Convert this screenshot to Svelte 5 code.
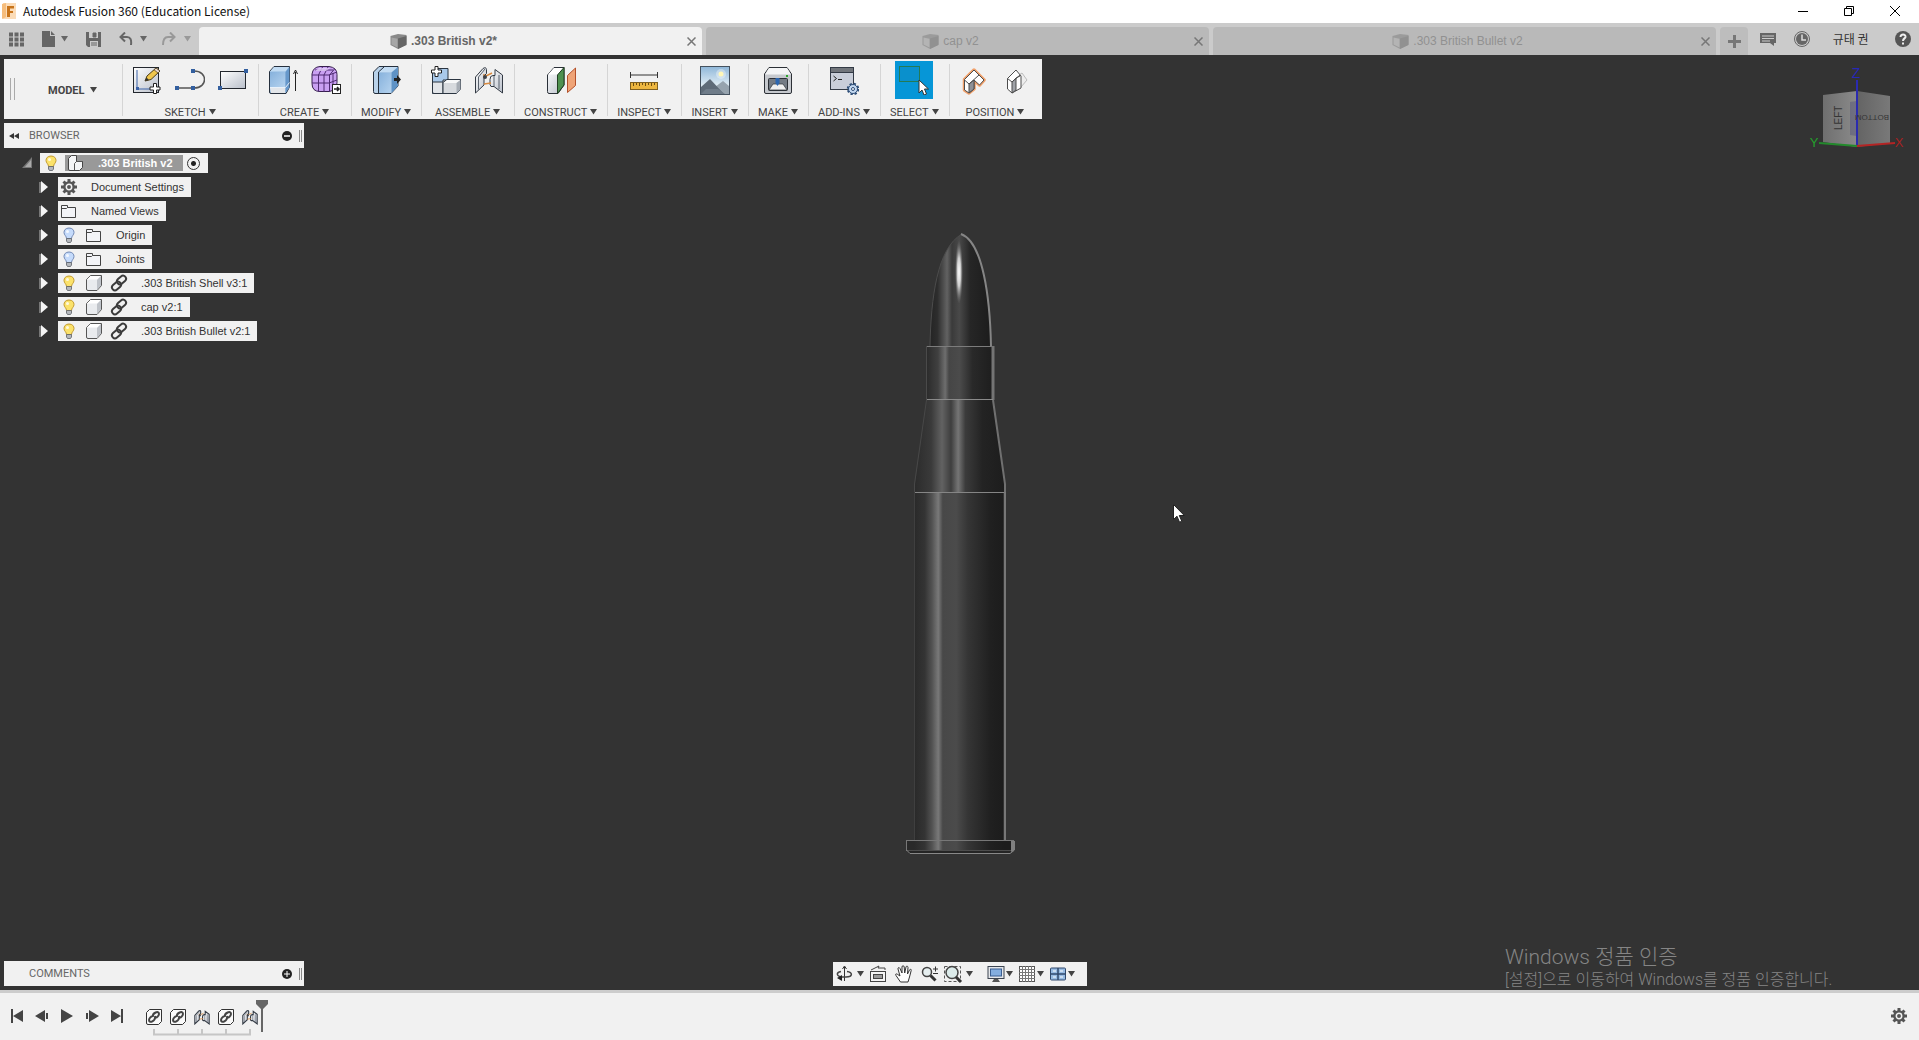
<script>
	const tabs = [
		{ title: '.303 British v2*', active: true },
		{ title: 'cap v2', active: false },
		{ title: '.303 British Bullet v2', active: false }
	];

	const groups = [
		{ label: 'SKETCH', icons: ['sketch', 'line', 'rectangle'] },
		{ label: 'CREATE', icons: ['extrude', 'form'] },
		{ label: 'MODIFY', icons: ['presspull'] },
		{ label: 'ASSEMBLE', icons: ['component', 'joint'] },
		{ label: 'CONSTRUCT', icons: ['plane'] },
		{ label: 'INSPECT', icons: ['measure'] },
		{ label: 'INSERT', icons: ['image'] },
		{ label: 'MAKE', icons: ['print'] },
		{ label: 'ADD-INS', icons: ['scripts'] },
		{ label: 'SELECT', icons: ['select'] },
		{ label: 'POSITION', icons: ['capture', 'revert'] }
	];

	const tree = [
		{ label: 'Document Settings', icons: ['gear'] },
		{ label: 'Named Views', icons: ['folder'] },
		{ label: 'Origin', icons: ['bulbOff', 'folder'] },
		{ label: 'Joints', icons: ['bulbOff', 'folder'] },
		{ label: '.303 British Shell v3:1', icons: ['bulb', 'body', 'link'] },
		{ label: 'cap v2:1', icons: ['bulb', 'body', 'link'] },
		{ label: '.303 British Bullet v2:1', icons: ['bulb', 'body', 'link'] }
	];

	const playback = ['first', 'prev', 'play', 'next', 'last'];
	const features = ['linked', 'linked', 'jointSmall', 'linked', 'jointSmall'];

	const navTools = [
		{ name: 'orbit', menu: true },
		{ name: 'look', menu: false },
		{ name: 'pan', menu: false },
		{ name: 'zoom', menu: false },
		{ name: 'fit', menu: true },
		{ name: 'display', menu: true },
		{ name: 'grid', menu: true },
		{ name: 'viewports', menu: true }
	];
</script>

<svelte:head>
	<title>Autodesk Fusion 360</title>
</svelte:head>

{#snippet caret()}
	<svg class="caret" width="7" height="6" viewBox="0 0 7 6" aria-hidden="true"><path d="M0 0h7L3.5 5.5z" fill="currentColor" /></svg>
{/snippet}

{#snippet cube()}
	<svg width="17" height="17" viewBox="0 0 17 17" aria-hidden="true">
		<path d="M0.5 3L8 1l8.500 1v9.500L8 16l-7.500-4z" fill="currentColor" opacity="0.75" />
		<path d="M1.500 4.500L7.500 5.800v8.700l-6-3z" fill="#fff" opacity="0.25" />
		<path d="M8 5.500l8.500-2.500v9L8 16z" fill="currentColor" />
	</svg>
{/snippet}

<!-- 30px icons of the ribbon -->
{#snippet toolIcon(name)}
	<svg width="30" height="30" viewBox="0 0 30 30" aria-hidden="true">
		{#if name === 'sketch'}
			<rect x="1.500" y="2.500" width="25" height="25" fill="url(#steel)" stroke="#23272e" />
			<path d="M5 5v19h16" fill="none" stroke="#3b62a8" />
			<rect x="4" y="22" width="3" height="3" fill="#3b62a8" />
			<path d="M13 16l2-5L24 3l4 3-9 8.500z" fill="#f0c64b" stroke="#4a3a12" />
			<path d="M13 16l1.500-3.500 2.500 2.500z" fill="#333" />
			<path d="M24 3l4 3-2 2-4-3.200z" fill="#e8d6d0" stroke="#4a3a12" stroke-width="0.7" />
			<path d="M21.500 18.500h3v3.500H28v3h-3.500v3.500h-3V25H18v-3h3.500z" fill="#fff" stroke="#222" />
		{:else if name === 'line'}
			<path d="M2 23h17M19 6c14 0 14 17 0 17" fill="none" stroke="#555" stroke-width="1.500" />
			<rect x="0" y="21" width="4" height="4" fill="#335f9f" />
			<rect x="16" y="21" width="4" height="4" fill="#335f9f" />
			<rect x="16" y="4" width="4" height="4" fill="#335f9f" />
		{:else if name === 'rectangle'}
			<rect x="2.500" y="6.500" width="25" height="17" fill="url(#steel)" stroke="#23272e" />
			<rect x="0" y="21" width="4" height="4" fill="#335f9f" />
			<rect x="26" y="4" width="4" height="4" fill="#335f9f" />
		{:else if name === 'extrude'}
			<path d="M1.500 6.500L6 1.500h15.500V22L18 28.500H3q-1.500 0-1.500-1.500z" fill="#8fb8df" stroke="#26303d" />
			<path d="M2 6.500L6 2h15l-3.500 4.500z" fill="#c3dcf3" />
			<path d="M2 7h15.500v15H2z" fill="url(#blue)" />
			<path d="M2 23h15.500v5H3z" fill="#e3e6ea" />
			<path d="M17.500 7L21.500 2v20.500L17.500 28z" fill="#6698cb" />
			<path d="M2 22.500h15.500l4-5" fill="none" stroke="#e8f1fa" />
			<path d="M27.500 26V7M25.500 9l2-4 2 4" fill="none" stroke="#222" />
		{:else if name === 'form'}
			<path d="M1 9q1-7 8-7.500h9q8 1 8 8v8q0 8-8 9H9q-8 0-8-8z" fill="#c9a0f2" stroke="#37204e" />
			<path d="M1 10h17l8-3M1 18h17l8-3M7.500 27V10l4-8M13 27V10l4-8M18.500 27V10l5-6M4 5h18M22 25V8" fill="none" stroke="#4f2b73" />
			<path d="M8 3h11l-4 3H4z" fill="#e7d2fc" opacity="0.8" />
			<rect x="21.500" y="19.500" width="8" height="9" fill="#fff" stroke="#222" />
			<path d="M23 24h5M26 22l2 2-2 2" fill="none" stroke="#222" stroke-width="1.500" />
		{:else if name === 'presspull'}
			<path d="M2.500 7L8 1.500h19V21l-7 7.500H4q-1.500 0-1.500-2z" fill="#b9d2ea" stroke="#26303d" />
			<path d="M7.500 7.500h13V28H8z" fill="url(#blue)" />
			<path d="M7.500 7L13 2h13.500l-6 5z" fill="#c3dcf3" />
			<path d="M20.500 7.500L27 2v19l-6.500 7z" fill="#5f93c6" />
			<path d="M7.500 28V7L13 2" fill="none" stroke="#26303d" />
			<path d="M23 13h3v-3l4 4.500-4 4.500v-3h-3z" fill="#222" />
		{:else if name === 'component'}
			<path d="M1.500 8L6 3.500h11V15h-5v13.500H1.500z" fill="#a9c9ea" stroke="#2a3440" />
			<path d="M1.500 17h10.500v11.500H3q-1.500 0-1.500-1.500z" fill="#e2e5e9" stroke="#2a3440" />
			<path d="M12 17.500l4-3h13.500v10l-4 4H12z" fill="#d7dade" stroke="#2a3440" />
			<path d="M12.500 18h13l3.500-3H16z" fill="#f7f8f9" />
			<path d="M25.500 18l4-3v9.500l-4 4z" fill="#a7adb5" />
			<path d="M4 1.500h3V5h3.500v3H7v3.500H4V8H.5V5H4z" fill="#fff" stroke="#222" />
		{:else if name === 'joint' || name === 'jointSmall'}
			<path d="M1.500 28V12L9 3.500q3-2 3.500 1v4L10 11v9z" fill="url(#steel)" stroke="#333a44" stroke-width={name === 'joint' ? 1 : 2} />
			<path d="M4.500 24.500V12L11 4" fill="none" stroke="#59616c" />
			<path d="M28.500 28V10L21 4.500v6h-2q-3 0-3 4v5q0 3 4 2z" fill="url(#steel)" stroke="#333a44" stroke-width={name === 'joint' ? 1 : 2} />
			<path d="M25 24V10M20 11v10" fill="none" stroke="#59616c" />
			<path d="M10 9v4m2-2l6-3m-8 11l7-1" stroke="#d88b42" stroke-width="1.500" fill="none" />
			<circle cx="11" cy="12" r="2" fill="#3b4049" />
		{:else if name === 'plane'}
			<path d="M1.500 10L8 2.500h10V20l-6 8.500H3q-1.500 0-1.500-2z" fill="url(#steel)" stroke="#2a3038" />
			<path d="M2 9.500L8 3h9.500L11 9.500z" fill="#fff" />
			<path d="M11.500 10L18 2.500V20l-6.500 8.500z" fill="#4f9150" stroke="#203e21" />
			<path d="M21.500 10.500l8-7.500v17.500l-8 7z" fill="#efa477" stroke="#b4512b" />
		{:else if name === 'measure'}
			<path d="M1.500 7v6m27-6v6M2 10h26" fill="none" stroke="#333" />
			<rect x="1.500" y="17.500" width="27" height="7" fill="#edb63f" stroke="#80601f" />
			<path d="M4.500 18v3m3-3v2m3-2v3m3-3v2m3-2v3m3-3v2m3-2v3m3-3v2" stroke="#6d4e12" />
		{:else if name === 'image'}
			<rect x="0.500" y="1.500" width="29" height="28" fill="url(#sky)" stroke="#45525f" />
			<circle cx="21" cy="9" r="5" fill="#fff" opacity="0.350" />
			<circle cx="21" cy="9" r="2.500" fill="#fff7b8" />
			<path d="M15 22l8-6 6 5v8H15z" fill="#96a3ae" />
			<path d="M1 22l9-8 14 15H1z" fill="#5e6b78" />
			<path d="M1 29l5-5h12l7 5z" fill="#6f7c89" />
		{:else if name === 'print'}
			<path d="M1.500 9L6 2.500h18L28.500 9v18q0 1.500-1.500 1.500H3q-1.500 0-1.500-1.500z" fill="#c6c9ce" stroke="#2c3036" />
			<path d="M2 9.500L6 3h18l4 6.500z" fill="#f4f5f6" />
			<rect x="5.500" y="13.500" width="19" height="12" rx="1" fill="#747b84" stroke="#2c3036" />
			<path d="M6 25l4-6h10l4 6z" fill="#f0f0f0" stroke="#2c3036" stroke-width="0.700" />
			<path d="M12.500 13h4v5l-2 3-2-3z" fill="#2d67b0" />
			<rect x="23" y="10" width="2" height="2" fill="#2ba82b" />
		{:else if name === 'scripts'}
			<rect x="1.500" y="2.500" width="23" height="22" fill="#c9ced9" stroke="#333a45" />
			<rect x="2" y="3" width="22" height="4" fill="#71757b" />
			<path d="M2 7.500h22" stroke="#333a45" />
			<path d="M4.500 11l3 2.500-3 2.500M9 14.500h4" fill="none" stroke="#222" />
			<circle cx="24" cy="24" r="5" fill="none" stroke="#2d4d77" stroke-width="2.500" stroke-dasharray="2.200 1.727" />
			<circle cx="24" cy="24" r="4.500" fill="#c3d8f0" stroke="#2d4d77" />
			<circle cx="24" cy="24" r="1.500" fill="#fff" stroke="#2d4d77" />
		{:else if name === 'select'}
			<rect x="0.500" y="1.500" width="20" height="15" fill="#0a90cc" stroke="#257a55" />
			<path d="M20 15v13l3-3 2 5 2.500-1-2-5h4z" fill="#fff" stroke="#333" />
		{:else if name === 'capture'}
			<path d="M5.500 14.500L15 5l10 10-4.500 5-5.500-5v9l-5 4-4.500-3z" fill="#f0a06a" stroke="#f0a06a" stroke-width="3.500" stroke-linejoin="round" />
			<path d="M5.500 14.500L15 5l10 10-4.500 5-5.500-5v9l-5 4-4.500-3z" fill="#fff" stroke="#4d4d4d" />
			<path d="M10 19l5-4v9l-5 4z" fill="#8d9096" stroke="#4d4d4d" />
			<path d="M5.500 15l4.500 4L20 10" fill="none" stroke="#4d4d4d" />
		{:else}
			<path d="M14 12l6-4 5 7-6 7-6-2z" fill="#ededed" stroke="#bbb" />
			<path d="M5.500 13.500L14 5l5 6v12l-9 5-4.500-4z" fill="#fff" stroke="#4d4d4d" />
			<path d="M10 17l4-4v12l-4 3zM14 13l4-2" fill="#a0a3a8" stroke="#4d4d4d" />
			<path d="M5.500 13.500L10 17l8-7" fill="none" stroke="#4d4d4d" />
		{/if}
	</svg>
{/snippet}

{#snippet gear(size)}
	<svg width={size} height={size} viewBox="0 0 16 16" aria-hidden="true">
		<path d="M8 0v16M0 8h16M2.500 2.500l11 11M13.500 2.500l-11 11" stroke="#555" stroke-width="3" />
		<circle cx="8" cy="8" r="5.800" fill="#555" />
		<circle cx="8" cy="8" r="2.700" fill="#555" stroke="#f1f1f1" stroke-width="1.500" />
	</svg>
{/snippet}

<!-- 16px icons of the browser tree -->
{#snippet treeIcon(name)}
	{#if name === 'gear'}
		{@render gear(16)}
	{:else}
		<svg width="18" height="18" viewBox="0 0 18 18" aria-hidden="true">
			{#if name === 'folder'}
				<path d="M1.500 15.500V3.500h6v2h8v10z" fill="#f3f4f7" stroke="#444" />
				<path d="M1.500 6.500h5l1-1" fill="none" stroke="#444" />
			{:else if name === 'bulb' || name === 'bulbOff'}
				<path d="M9 2C5.500 2 4 4.300 4 6.500c0 2.500 2.500 3.500 2.500 6h5c0-2.500 2.500-3.500 2.500-6C14 4.300 12.500 2 9 2z" fill={name === 'bulb' ? '#fbe26b' : '#c5dbfb'} stroke={name === 'bulb' ? '#c39b2f' : '#7289b5'} />
				<circle cx="7.500" cy="5.500" r="1.500" fill="#fff" opacity="0.800" />
				<path d="M6.500 12.500h5v2.500l-1 1.500h-3l-1-1.500z" fill="#b5b8bd" stroke="#5b5f66" stroke-width="0.800" />
			{:else if name === 'body'}
				<path d="M1.500 5.500l4-4h11v10l-4.500 5H3q-1.500 0-1.500-1.500z" fill="#e9ebee" stroke="#555" />
				<path d="M2 5.500l3.500-3.500h10.500L12 5.500z" fill="#fff" />
				<path d="M12 6l4-4v9.500L12 16z" fill="#bfc3c9" />
			{:else}
				<g fill="none" stroke="#3c3c3c" stroke-width="2">
					<rect x="6.500" y="3" width="10" height="6" rx="3" transform="rotate(-42 11.500 6)" />
					<rect x="1.500" y="9" width="10" height="6" rx="3" transform="rotate(-42 6.500 12)" />
				</g>
			{/if}
		</svg>
	{/if}
{/snippet}

{#snippet navIcon(name)}
	<svg width="20" height="20" viewBox="0 0 20 20" aria-hidden="true">
		{#if name === 'orbit'}
			<path d="M10.500 3v14M8.500 5l2-3 2 3" fill="none" stroke="#333" />
			<path d="M7 7.500c-5 1-5 4.500 1 5.500h4c7 0 7-5 1-5.500" fill="none" stroke="#444" stroke-width="1.500" />
			<path d="M3 14l5-3v6z" fill="#222" />
		{:else if name === 'look'}
			<rect x="2.500" y="7.500" width="15" height="10" fill="#f5f5f5" stroke="#444" />
			<rect x="5.500" y="10.500" width="9" height="4" fill="#999" stroke="#444" />
			<path d="M3 6l8-4-1 2h7v2" fill="none" stroke="#444" />
		{:else if name === 'pan'}
			<path d="M6.500 18L2 11.500c-1-2 .5-2 2-.8L6 12 4 5c-.3-1.600 1.300-2 2-.5L8 9V3c0-1.700 2-1.700 2.200 0l.5 6 1.300-6c.4-1.500 2-1 2 .5L13.500 10l2-4c.8-1.400 2-.8 1.700.5L15.500 13 14 18z" fill="#fff" stroke="#333" />
		{:else if name === 'zoom'}
			<circle cx="7" cy="8" r="4.500" fill="#e6eff0" stroke="#444" stroke-width="1.500" />
			<path d="M10.500 11.500l5 5" stroke="#333" stroke-width="3" />
			<path d="M13 5h5m-2.500-2.500v5M13 9.500h5" stroke="#333" />
		{:else if name === 'fit'}
			<rect x="1.500" y="2.500" width="16" height="15" fill="none" stroke="#555" stroke-dasharray="3 2" />
			<circle cx="9" cy="8.500" r="6" fill="#dcebea" stroke="#444" stroke-width="1.500" />
			<path d="M13 13l5 5" stroke="#333" stroke-width="3" />
		{:else if name === 'display'}
			<rect x="2" y="2.500" width="16" height="12" fill="#e4e7eb" stroke="#3c4451" />
			<rect x="4.500" y="5" width="11" height="7" fill="#84aee0" stroke="#3b5f92" />
			<path d="M8 15h4l2 3H6z" fill="#555" />
		{:else if name === 'grid'}
			<rect x="2.500" y="2.500" width="15" height="15" fill="#fff" stroke="#555" />
			<path d="M5.500 2v16m3-16v16m3-16v16m3-16v16M2 5.500h16m-16 3h16m-16 3h16m-16 3h16" stroke="#777" />
		{:else}
			<rect x="2.500" y="4" width="15" height="12" rx="1" fill="#97bbe3" stroke="#30496d" />
			<path d="M10 4v12M2.500 10h15" stroke="#30496d" stroke-width="1.500" />
			<path d="M5 7h3m4 0h3M5 13h3m4 0h3" stroke="#fff" />
		{/if}
	</svg>
{/snippet}

<svg class="defs" width="0" height="0" aria-hidden="true">
	<defs>
		<linearGradient id="steel" x1="0" y1="0" x2="1" y2="1">
			<stop offset="0" stop-color="#fff" />
			<stop offset="1" stop-color="#b9bfca" />
		</linearGradient>
		<linearGradient id="blue" x1="0" y1="0" x2="1" y2="1">
			<stop offset="0" stop-color="#86b1dc" />
			<stop offset="1" stop-color="#b5d3ef" />
		</linearGradient>
		<linearGradient id="sky" x1="0" y1="0" x2="0" y2="1">
			<stop offset="0" stop-color="#8fb7d9" />
			<stop offset="0.700" stop-color="#e2eef5" />
		</linearGradient>
	</defs>
</svg>

<div class="app">
	<header class="titlebar">
		<svg width="16" height="16" viewBox="0 0 16 16" aria-hidden="true">
			<rect x="1" y="0" width="13" height="16" fill="#fbdcb8" />
			<path d="M0 1l4-1v14l-4 2z" fill="#f6bd7c" />
			<path d="M5 3h7v2.500H8V8h3v2H8v4H5z" fill="#c8741a" />
		</svg>
		<h1>Autodesk Fusion 360 (Education License)</h1>
		<div class="window-buttons">
			<button aria-label="Minimize"><svg width="12" height="12" viewBox="0 0 12 12"><path d="M1 6.500h10" stroke="#000" /></svg></button>
			<button aria-label="Restore"><svg width="12" height="12" viewBox="0 0 12 12"><path d="M1.500 3.500h7v7h-7zM3.500 3V1.500h7v7H9" fill="none" stroke="#000" /></svg></button>
			<button aria-label="Close"><svg width="12" height="12" viewBox="0 0 12 12"><path d="M1 1l10 10M11 1L1 11" stroke="#000" /></svg></button>
		</div>
	</header>

	<nav class="tabbar">
		<div class="quick">
			<button class="q-grid" aria-label="Data panel">
				<svg width="15" height="15" viewBox="0 0 15 15"><path d="M0 2.500h15M0 7.500h15M0 12.500h15" stroke="#666" stroke-width="4" stroke-dasharray="4 1.500" /></svg>
			</button>
			<button class="q-file" aria-label="File">
				<svg width="13" height="16" viewBox="0 0 13 16"><path d="M0 0h8v5h5v11H0zM9 0l4 4H9z" fill="#666" /></svg>
				{@render caret()}
			</button>
			<button class="q-save" aria-label="Save">
				<svg width="15" height="15" viewBox="0 0 15 15"><path d="M0 0h15v15H2l-2-2z" fill="#666" /><path d="M3 0h9v6H3zM4 9h8v6H4z" fill="#ccc" /><path d="M7 1h3v4H7zM5 11h6M5 13h6" fill="#666" stroke="#666" /></svg>
			</button>
			<button class="q-undo" aria-label="Undo">
				<svg width="15" height="14" viewBox="0 0 15 14"><path d="M2 5h6q5 0 4 8M6 .5L1.500 5 6 9.500" fill="none" stroke="#666" stroke-width="2" /></svg>
				{@render caret()}
			</button>
			<button class="q-redo" aria-label="Redo">
				<svg width="15" height="14" viewBox="0 0 15 14"><path d="M13 5H7q-5 0-5 8M9 .5L13.500 5 9 9.500" fill="none" stroke="currentColor" stroke-width="2" /></svg>
				{@render caret()}
			</button>
		</div>
		{#each tabs as tab}
			<div class="tab" class:active={tab.active}>
				<button class="tab-title">{@render cube()}{tab.title}</button>
				<button class="tab-close" aria-label="Close {tab.title}">
					<svg width="9" height="9" viewBox="0 0 9 9"><path d="M.5 .5l8 8M8.500 .5l-8 8" stroke="currentColor" stroke-width="1.500" /></svg>
				</button>
			</div>
		{/each}
		<button class="new-tab" aria-label="New design">
			<svg width="13" height="13" viewBox="0 0 13 13"><path d="M6.500 0v13M0 6.500h13" stroke="#777" stroke-width="3" /></svg>
		</button>
		<div class="account">
			<button aria-label="Comments">
				<svg width="16" height="15" viewBox="0 0 16 15"><path d="M0 1h16v10h-2v3l-4-3H0z" fill="#666" /><path d="M2 4h12M2 6.500h12M2 9h8" stroke="#ccc" /></svg>
			</button>
			<button aria-label="Job status">
				<svg width="16" height="16" viewBox="0 0 16 16"><circle cx="8" cy="8" r="7.500" fill="none" stroke="#666" /><circle cx="8" cy="8" r="6" fill="#666" /><path d="M8 3.500V9h4" fill="none" stroke="#ddd" stroke-width="1.500" /></svg>
			</button>
			<button class="user">규태 권</button>
			<button aria-label="Help">
				<svg width="16" height="16" viewBox="0 0 16 16"><circle cx="8" cy="8" r="8" fill="#555" /><path d="M5.500 6c0-3.500 5.500-3 5 0-.3 1.500-2.500 1.500-2.500 4M8 11.500v2" fill="none" stroke="#eee" stroke-width="2" /></svg>
			</button>
		</div>
	</nav>

	<main class="viewport">
		<div class="scene">
			<svg width="113" height="626" viewBox="904 230 113 626" role="img" aria-label="Cartridge model">
				<defs>
					<linearGradient id="case" gradientUnits="userSpaceOnUse" x1="914" y1="0" x2="1004" y2="0">
						<stop offset="0" stop-color="#292929" />
						<stop offset="0.120" stop-color="#343434" />
						<stop offset="0.200" stop-color="#525252" />
						<stop offset="0.270" stop-color="#797979" />
						<stop offset="0.320" stop-color="#484848" />
						<stop offset="0.470" stop-color="#4b4b4b" />
						<stop offset="0.600" stop-color="#353535" />
						<stop offset="0.850" stop-color="#202020" />
						<stop offset="1" stop-color="#1c1c1c" />
					</linearGradient>
					<linearGradient id="neck" gradientUnits="userSpaceOnUse" x1="927" y1="0" x2="992" y2="0">
						<stop offset="0" stop-color="#2c2c2c" />
						<stop offset="0.170" stop-color="#404040" />
						<stop offset="0.280" stop-color="#6e6e6e" />
						<stop offset="0.340" stop-color="#464646" />
						<stop offset="0.500" stop-color="#4b4b4b" />
						<stop offset="0.700" stop-color="#292929" />
						<stop offset="1" stop-color="#1e1e1e" />
					</linearGradient>
					<linearGradient id="shoulder" x1="0" y1="0" x2="1" y2="0">
						<stop offset="0" stop-color="#2c2c2c" />
						<stop offset="0.180" stop-color="#3a3a3a" />
						<stop offset="0.300" stop-color="#626262" />
						<stop offset="0.400" stop-color="#3e3e3e" />
						<stop offset="0.480" stop-color="#757575" />
						<stop offset="0.560" stop-color="#3b3b3b" />
						<stop offset="0.750" stop-color="#232323" />
						<stop offset="1" stop-color="#1d1d1d" />
					</linearGradient>
					<linearGradient id="ogive" x1="0" y1="0" x2="1" y2="0">
						<stop offset="0" stop-color="#242424" />
						<stop offset="0.120" stop-color="#2d2d2d" />
						<stop offset="0.280" stop-color="#626262" />
						<stop offset="0.360" stop-color="#3a3a3a" />
						<stop offset="0.480" stop-color="#494949" />
						<stop offset="0.660" stop-color="#262626" />
						<stop offset="1" stop-color="#1c1c1c" />
					</linearGradient>
					<radialGradient id="glint">
						<stop offset="0" stop-color="#fff" />
						<stop offset="0.450" stop-color="#ddd" stop-opacity="0.900" />
						<stop offset="1" stop-color="#777" stop-opacity="0" />
					</radialGradient>
				</defs>
				<path d="M930 346C931 298 937 248 962 234C983 246 991 298 991 346z" fill="url(#ogive)" />
				<path d="M930 346C931 298 937 248 962 234" fill="none" stroke="#4c4c4c" />
				<path d="M961 234C983 242 990 298 991 346" fill="none" stroke="#858585" stroke-width="2" />
				<ellipse cx="959" cy="272" rx="4" ry="32" fill="url(#glint)" />
				<rect x="927" y="346" width="66" height="54" fill="url(#neck)" />
				<path d="M927 346.500h67" stroke="#7c7c7c" />
				<path d="M926.500 346v54" stroke="#4a4a4a" />
				<path d="M993 346v54" stroke="#747474" stroke-width="3" />
				<path d="M927 400L915 484v8h90v-8L993 400z" fill="url(#shoulder)" />
				<path d="M926.500 400L914.500 484v8" fill="none" stroke="#484848" />
				<path d="M993 400L1005 484v8" fill="none" stroke="#707070" stroke-width="2" />
				<path d="M927 399.500h66" stroke="#8a8a8a" />
				<rect x="915" y="492" width="88" height="348" fill="url(#case)" />
				<path d="M914 492.500h92" stroke="#858585" />
				<path d="M914.500 492v348" stroke="#3f3f3f" />
				<path d="M1005 492v348" stroke="#777" stroke-width="2" />
				<rect x="906.500" y="840.500" width="107" height="10" fill="url(#case)" stroke="#777" />
				<path d="M907 850.500l3 3h100l4-3" fill="#252525" stroke="#888" />
				<path d="M1011 841h4v9l-4 2z" fill="#808080" />
			</svg>
		</div>

		<svg class="viewcube" width="96" height="90" viewBox="1808 62 96 90" role="img" aria-label="View cube">
			<defs>
				<linearGradient id="cubeLeft"><stop offset="0" stop-color="#6f6f6f" /><stop offset="1" stop-color="#8a8a8a" /></linearGradient>
				<linearGradient id="cubeRight"><stop offset="0" stop-color="#646464" /><stop offset="1" stop-color="#797979" /></linearGradient>
			</defs>
			<path d="M1823 95l34-4v56l-34-5z" fill="url(#cubeLeft)" />
			<path d="M1857 91l33 5v47l-33 4z" fill="url(#cubeRight)" />
			<path d="M1850 102l7-1v35l-7-1z" fill="#55557a" opacity="0.500" />
			<path d="M1857 80v66" stroke="#2b2bb0" stroke-width="2" />
			<path d="M1819 143l38 3" stroke="#238a2c" stroke-width="2" />
			<path d="M1857 146l38-3" stroke="#b32424" stroke-width="2" />
			<text x="1856" y="78" font-size="14" fill="#2727b8" text-anchor="middle">Z</text>
			<text x="1814" y="147" font-size="13" fill="#23a02c" text-anchor="middle">Y</text>
			<text x="1899" y="147" font-size="13" fill="#a82222" text-anchor="middle">X</text>
			<text transform="translate(1842 130) rotate(-90)" font-size="10" fill="#353535">LEFT</text>
			<text transform="translate(1889 115) rotate(180)" font-size="8" fill="#353535">BOTTOM</text>
		</svg>

		<svg class="pointer" width="12" height="19" viewBox="0 0 12 19" aria-hidden="true">
			<path d="M.5 .5v15l3.500-3.300 2.500 6 2.300-1-2.500-5.700h5z" fill="#fff" stroke="#222" />
		</svg>

		<div class="watermark">
			<p class="wm-title">Windows 정품 인증</p>
			<p>[설정]으로 이동하여 Windows를 정품 인증합니다.</p>
		</div>

		<div class="overlay">
			<div class="ribbon">
				<div class="workspace">
					<span class="grip"></span>
					<button>MODEL {@render caret()}</button>
				</div>
				{#each groups as group}
					<div class="group">
						<div class="group-icons">
							{#each group.icons as name}
								<button class="tool" class:selected={name === 'select'} aria-label={name}>{@render toolIcon(name)}</button>
							{/each}
						</div>
						<button class="group-label">{group.label} {@render caret()}</button>
					</div>
				{/each}
			</div>

			<section class="panel">
				<button class="collapse" aria-label="Collapse browser">
					<svg width="10" height="6" viewBox="0 0 10 6"><path d="M5 0v6L0 3zM10 0v6L5 3z" fill="#333" /></svg>
				</button>
				<h2>BROWSER</h2>
				<button class="round" aria-label="Minimize browser">
					<svg width="10" height="10" viewBox="0 0 10 10"><circle cx="5" cy="5" r="5" fill="#222" /><path d="M2 5h6" stroke="#fff" stroke-width="1.500" /></svg>
				</button>
				<span class="edge"></span>
			</section>

			<ul class="tree">
				<li class="root">
					<button class="expander" aria-label="Collapse">
						<svg width="10" height="12" viewBox="0 0 10 12"><path d="M10 0v11H0z" fill="#777" /><path d="M9 3v7H3z" fill="#aaa" /></svg>
					</button>
					<div class="node">
						<span class="slot">{@render treeIcon('bulb')}</span>
						<div class="highlight">
							<svg width="18" height="18" viewBox="0 0 18 18" aria-hidden="true">
								<path d="M1.500 4.500l3-3h5v6h6v6l-3 3h-9.500q-1.500 0-1.500-1.500z" fill="#f4f5f6" stroke="#444" />
								<path d="M7.500 16V9.500l2-2h6" fill="none" stroke="#555" />
							</svg>
							<span>.303 British v2</span>
						</div>
						<input type="radio" checked aria-label="Activate component" />
					</div>
				</li>
				{#each tree as item}
					<li>
						<button class="expander" aria-label="Expand {item.label}">
							<svg width="9" height="12" viewBox="0 0 9 12"><path d="M0 1h2v11H0z" fill="#777" /><path d="M2 0l7 6-7 6z" fill="#f5f5f5" /></svg>
						</button>
						<div class="node">
							{#each item.icons as name}
								<span class="slot">{@render treeIcon(name)}</span>
							{/each}
							<span class="name">{item.label}</span>
						</div>
					</li>
				{/each}
			</ul>

			<div class="bottom">
				<section class="panel">
					<span class="collapse"></span>
					<h2>COMMENTS</h2>
					<button class="round" aria-label="Expand comments">
						<svg width="10" height="10" viewBox="0 0 10 10"><circle cx="5" cy="5" r="5" fill="#222" /><path d="M2 5h6M5 2v6" stroke="#fff" /></svg>
					</button>
					<span class="edge"></span>
				</section>
				<div class="navbar">
					{#each navTools as tool}
						<button class:menu={tool.menu} class={tool.name} aria-label={tool.name}>
							{@render navIcon(tool.name)}
							{#if tool.menu}{@render caret()}{/if}
						</button>
					{/each}
				</div>
			</div>
		</div>
	</main>

	<footer class="timeline">
		<div class="playback">
			{#each playback as name}
				<button aria-label={name}>
					<svg width="14" height="14" viewBox="0 0 14 14" fill="#444">
						{#if name === 'first'}
							<path d="M1 0h2v14H1zM13 1v12L3 7z" />
						{:else if name === 'prev'}
							<path d="M10 1v12L0 7zM11 4h2v6h-2z" />
						{:else if name === 'play'}
							<path d="M1 0v14l12-7z" />
						{:else if name === 'next'}
							<path d="M4 1v12l10-6zM1 4h2v6H1z" />
						{:else}
							<path d="M1 1v12l10-6zM11 0h2v14h-2z" />
						{/if}
					</svg>
				</button>
			{/each}
		</div>
		<div class="history">
			<div class="features">
				{#each features as name}
					<button aria-label={name}>
						{#if name === 'linked'}
							<svg width="16" height="16" viewBox="0 0 16 16">
								<path d="M.5 3.500l3-3h12v12l-3 3H2q-1.500 0-1.500-1.500z" fill="#fafafa" stroke="#333" />
								<g fill="none" stroke="#444" stroke-width="2">
									<path d="M7 8C6 4 13 1 13 5c0 2-2 3-3 4" />
									<path d="M9 7c1 5-6 8-6 4 0-2 2-3 3-4" />
								</g>
							</svg>
						{:else}
							<span class="small-joint">{@render toolIcon(name)}</span>
						{/if}
					</button>
				{/each}
			</div>
			<svg class="bracket" width="98" height="7" viewBox="0 0 98 7" aria-hidden="true"><path d="M1 0v5.500h96V0M25 0v5M49 0v5M73 0v5" fill="none" stroke="#c6c6c6" stroke-width="2" /></svg>
		</div>
		<svg class="marker" width="12" height="32" viewBox="0 0 12 32" aria-hidden="true"><path d="M0 0h12v4L7 9v23H5V9L0 4z" fill="#666" /></svg>
		<button class="settings" aria-label="Timeline settings">{@render gear(16)}</button>
	</footer>
</div>

<style>
	:global(body) {
		margin: 0;
	}

	.app {
		display: flex;
		flex-direction: column;
		height: 100vh;
		overflow: hidden;
		font-family: Roboto, 'Liberation Sans', sans-serif;
		font-size: 11px;
		color: #444;
		background: #333;
	}

	.defs {
		position: absolute;
	}

	svg {
		display: block;
		flex: none;
	}

	button {
		display: flex;
		align-items: center;
		justify-content: center;
		border: 0;
		padding: 0;
		background: none;
		color: inherit;
		font: inherit;
	}

	h1,
	h2,
	p,
	ul {
		margin: 0;
		padding: 0;
		font-weight: 400;
	}

	/* title bar */
	.titlebar {
		display: flex;
		align-items: center;
		height: 22px;
		padding: 0 1px 1px 2px;
		background: #fff;
	}

	h1 {
		margin-left: 5px;
		font-family: 'Noto Sans CJK KR', sans-serif;
		font-size: 12px;
		line-height: 22px;
		color: #111;
	}

	.window-buttons {
		display: flex;
		margin-left: auto;
	}

	.window-buttons button {
		width: 46px;
		height: 20px;
	}

	/* document tabs */
	.tabbar {
		display: flex;
		align-items: stretch;
		height: 28px;
		padding-top: 4px;
		background: #cbcbcb;
	}

	.quick {
		display: flex;
		align-items: center;
		gap: 18px;
		width: 190px;
		padding: 0 0 4px 9px;
		color: #666;
	}

	.quick button {
		gap: 6px;
	}

	.quick .q-redo {
		gap: 8px;
		margin-left: -4px;
		color: #999;
	}

	.tab {
		display: flex;
		flex: 1;
		margin-right: 4px;
		border-radius: 4px 4px 0 0;
		background: #b9b9b9;
		color: #919191;
		font-family: 'Liberation Sans', sans-serif;
		font-size: 12px;
	}

	.tab.active {
		background: #f1f1f1;
		color: #666;
		font-weight: 700;
	}

	.tab-title {
		flex: 1;
		gap: 4px;
		padding-left: 8px;
	}

	.tab-close {
		width: 22px;
		color: #777;
	}

	.new-tab {
		width: 28px;
		border-radius: 4px 4px 0 0;
		background: #bdbdbd;
	}

	.account {
		display: flex;
		align-items: center;
		width: 151px;
		padding: 0 8px 4px 12px;
		justify-content: space-between;
	}

	.user {
		margin: 0 8px 0 4px;
		font-family: 'Noto Sans CJK KR', sans-serif;
		font-size: 12px;
		line-height: 16px;
		color: #333;
	}

	/* canvas */
	.viewport {
		position: relative;
		display: flex;
		flex: 1;
		min-height: 0;
	}

	.scene {
		position: absolute;
		inset: 0;
		display: flex;
		align-items: center;
		justify-content: center;
		padding: 41px 0 0 1px;
	}

	.viewcube {
		position: absolute;
		top: 7px;
		right: 15px;
		font-family: 'Liberation Sans', sans-serif;
	}

	.pointer {
		position: absolute;
		top: 449px;
		left: 1173px;
	}

	.watermark {
		position: absolute;
		right: 78px;
		bottom: 0;
		width: 336px;
		white-space: nowrap;
		font-family: Roboto, 'Noto Sans CJK KR', sans-serif;
		font-size: 16px;
		line-height: 20px;
		color: #858585;
	}

	.watermark p {
		font-weight: 300;
	}

	.watermark .wm-title {
		font-size: 21px;
		line-height: 26px;
	}

	.overlay {
		position: relative;
		display: flex;
		flex: 1;
		flex-direction: column;
		padding: 4px;
	}

	/* ribbon */
	.ribbon {
		display: flex;
		align-self: flex-start;
		height: 60px;
		background: #f1f1f1;
	}

	.workspace {
		display: flex;
		align-items: center;
		width: 118px;
		font-weight: 700;
	}

	.workspace button {
		gap: 5px;
		margin-left: 38px;
		padding-top: 2px;
	}

	.grip {
		width: 3px;
		height: 22px;
		margin-left: 6px;
		margin-right: -5px;
		border: solid #aaa;
		border-width: 0 1px;
	}

	.group {
		display: flex;
		flex-direction: column;
		align-items: center;
		padding: 2px 10px 0;
		background: linear-gradient(#d5d5d5, #d5d5d5) 0 5px / 1px 52px no-repeat;
	}

	.group-icons {
		display: flex;
		gap: 13px;
	}

	.tool {
		width: 30px;
		height: 38px;
	}

	.tool.selected {
		width: 38px;
		background: #0696d7;
	}

	.group-label {
		gap: 3px;
		height: 20px;
		padding-top: 6px;
		white-space: nowrap;
	}

	/* browser and comments */
	.panel {
		display: flex;
		align-items: center;
		width: 300px;
		height: 25px;
		background: #f1f1f1;
	}

	.overlay > .panel {
		margin-top: 4px;
	}

	.collapse {
		width: 20px;
		margin-right: 5px;
	}

	h2 {
		font-size: 11px;
		color: #666;
	}

	.round {
		margin-left: auto;
		margin-right: 7px;
	}

	.edge {
		width: 1px;
		height: 12px;
		margin-right: 2px;
		border: solid #888;
		border-width: 0 1px;
	}

	.tree {
		display: flex;
		flex-direction: column;
		gap: 4px;
		margin-top: 5px;
		list-style: none;
		font-family: 'Liberation Sans', sans-serif;
		color: #333;
	}

	.tree li {
		display: flex;
		align-items: center;
		height: 20px;
		padding-left: 35px;
	}

	.tree .root {
		padding-left: 18px;
	}

	.expander {
		width: 9px;
		margin-right: 10px;
	}

	.root .expander {
		margin-right: 9px;
	}

	.node {
		display: flex;
		align-items: center;
		height: 20px;
		background: #f1f1f1;
	}

	.slot {
		display: flex;
		justify-content: center;
		width: 21px;
		padding-right: 4px;
	}

	.name {
		padding: 0 7px 0 8px;
	}

	.highlight {
		display: flex;
		align-items: center;
		gap: 13px;
		height: 16px;
		padding: 0 10px 0 2px;
		background: #999;
		color: #fff;
		font-weight: 700;
	}

	input[type='radio'] {
		appearance: none;
		width: 13px;
		height: 13px;
		margin: 0 8px 0 4px;
		border: 1px solid #333;
		border-radius: 50%;
		background: radial-gradient(circle, #222 0 2px, transparent 3px);
	}

	.bottom {
		display: grid;
		grid-template-columns: 1fr auto 1fr;
		margin-top: auto;
	}

	.navbar {
		display: flex;
		align-items: center;
		height: 24px;
		margin-top: 1px;
		padding: 0 10px 0 1px;
		background: #f1f1f1;
	}

	.navbar button {
		width: 26px;
	}

	.navbar button.menu {
		width: 31px;
	}

	.navbar .orbit {
		gap: 3px;
		width: 32px;
	}

	.navbar .fit {
		gap: 3px;
		margin-right: 10px;
	}

	/* timeline */
	.timeline {
		display: flex;
		align-items: center;
		height: 45px;
		padding: 0 0 2px 4px;
		border-top: 3px solid #ccc;
		background: #f1f1f1;
	}

	.playback {
		display: flex;
	}

	.playback button {
		width: 25px;
		height: 24px;
	}

	.history {
		margin-left: 13px;
		padding-top: 12px;
	}

	.features {
		display: flex;
	}

	.features button {
		width: 24px;
		height: 20px;
	}

	.small-joint svg {
		width: 16px;
		height: 16px;
	}

	.bracket {
		margin: 2px 0 0 11px;
	}

	.marker {
		margin: 0 0 0 -6px;
	}

	.settings {
		width: 40px;
		height: 24px;
		margin-left: auto;
	}
</style>
